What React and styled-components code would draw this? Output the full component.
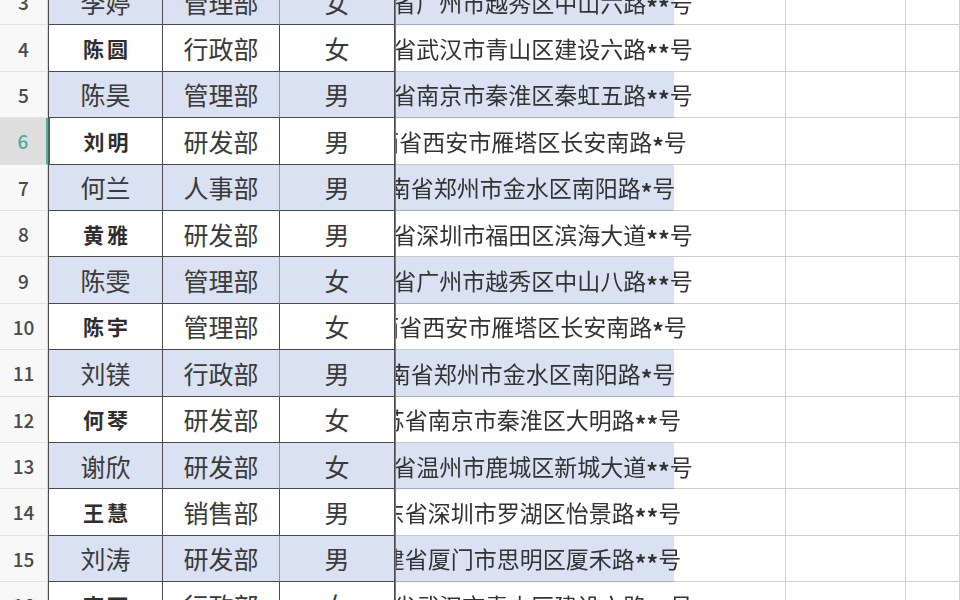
import styled, { createGlobalStyle } from "styled-components";

// spreadsheet view, scrolled so row 3 is half hidden at the top
const rows = [
  { n: 3, name: "李婷", dept: "管理部", sex: "女", addr: "广东省广州市越秀区中山六路**号" },
  { n: 4, name: "陈圆", dept: "行政部", sex: "女", addr: "湖北省武汉市青山区建设六路**号" },
  { n: 5, name: "陈昊", dept: "管理部", sex: "男", addr: "江苏省南京市秦淮区秦虹五路**号" },
  { n: 6, name: "刘明", dept: "研发部", sex: "男", addr: "陕西省西安市雁塔区长安南路*号" },
  { n: 7, name: "何兰", dept: "人事部", sex: "男", addr: "河南省郑州市金水区南阳路*号" },
  { n: 8, name: "黄雅", dept: "研发部", sex: "男", addr: "广东省深圳市福田区滨海大道**号" },
  { n: 9, name: "陈雯", dept: "管理部", sex: "女", addr: "广东省广州市越秀区中山八路**号" },
  { n: 10, name: "陈宇", dept: "管理部", sex: "女", addr: "陕西省西安市雁塔区长安南路*号" },
  { n: 11, name: "刘镁", dept: "行政部", sex: "男", addr: "河南省郑州市金水区南阳路*号" },
  { n: 12, name: "何琴", dept: "研发部", sex: "女", addr: "江苏省南京市秦淮区大明路**号" },
  { n: 13, name: "谢欣", dept: "研发部", sex: "女", addr: "浙江省温州市鹿城区新城大道**号" },
  { n: 14, name: "王慧", dept: "销售部", sex: "男", addr: "广东省深圳市罗湖区怡景路**号" },
  { n: 15, name: "刘涛", dept: "研发部", sex: "男", addr: "福建省厦门市思明区厦禾路**号" },
  { n: 16, name: "李丽", dept: "行政部", sex: "女", addr: "湖北省武汉市青山区建设六路**号" },
];

const SELECTED = 6;

const renderAddress = (addr) =>
  addr.split(/(\*+)/).map((part, i) =>
    part.startsWith("*") ? <Star key={i}>{part}</Star> : part
  );

const App = () => {
  return (
    <>
      <GlobalStyle />
      <Viewport>
        <Sheet>
          {rows.map((r) => {
            const fill = r.n % 2 === 1;
            const selected = r.n === SELECTED;
            return (
              <Row key={r.n}>
                <RowNum $selected={selected}>{r.n}</RowNum>
                <NameCell $fill={fill} $selected={selected}>
                  {r.name}
                </NameCell>
                <Cell $w={117} $fill={fill} $soft={fill}>
                  {r.dept}
                </Cell>
                <Cell $w={115} $fill={fill}>
                  {r.sex}
                </Cell>
                <AddressArea>
                  <AddressCell $fill={fill}>
                    <span>{renderAddress(r.addr)}</span>
                  </AddressCell>
                  <GridCell $w={112} />
                  <GridCell $w={120} />
                  <GridCell $grow />
                </AddressArea>
              </Row>
            );
          })}
        </Sheet>
      </Viewport>
    </>
  );
};

export default App;

const GlobalStyle = createGlobalStyle`
  html, body {
    margin: 0;
    padding: 0;
    background: #ffffff;
    overflow: hidden;
  }
  body {
    font-family: "Noto Sans CJK SC", "Noto Sans", sans-serif;
  }
`;

const Viewport = styled.div`
  width: 960px;
  height: 600px;
  overflow: hidden;
  filter: blur(0.4px);
`;

const Sheet = styled.div`
  margin-top: -21px;
  display: flex;
  flex-direction: column;
`;

const Row = styled.div`
  display: flex;
  height: 46.4px;
  flex: none;
`;

const RowNum = styled.div`
  flex: none;
  width: 48px;
  box-sizing: border-box;
  display: flex;
  align-items: center;
  justify-content: center;
  font-size: 19px;
  font-weight: 500;
  color: ${(p) => (p.$selected ? "#4fa898" : "#4a4a4a")};
  background: ${(p) => (p.$selected ? "#dedede" : "#f8f8f8")};
  border-bottom: 1px solid #e2e2e2;
  border-right: ${(p) => (p.$selected ? "2px solid #5fa99b" : "1px solid #d8d8d8")};
`;

const Cell = styled.div`
  flex: none;
  width: ${(p) => p.$w}px;
  box-sizing: border-box;
  display: flex;
  align-items: center;
  justify-content: center;
  font-size: 25px;
  color: #3a3a3a;
  background: ${(p) => (p.$fill ? "#d9e1f2" : "#ffffff")};
  border-right: 1px solid ${(p) => (p.$soft ? "#8a96ae" : "#4a4a4a")};
  border-bottom: 1px solid #4a4a4a;
  white-space: nowrap;
`;

const NameCell = styled(Cell)`
  width: 115px;
  border-left: ${(p) => (p.$selected ? "2px solid #3f6f64" : "1px solid #4a4a4a")};
  ${(p) =>
    !p.$fill &&
    `
    font-size: 21px;
    font-weight: 700;
    letter-spacing: 3px;
    padding-left: 3px;
    color: #2e2e2e;
  `}
`;

const AddressArea = styled.div`
  flex: 1;
  min-width: 0;
  display: flex;
  overflow: hidden;
  border-left: 1px solid #7a7a7a;
`;

const AddressCell = styled.div`
  flex: none;
  width: 308px;
  margin-left: -30px;
  box-sizing: border-box;
  display: flex;
  align-items: center;
  justify-content: center;
  white-space: nowrap;
  font-size: 23px;
  color: #333333;
  background: ${(p) => (p.$fill ? "#d9e1f2" : "transparent")};
  border-bottom: 1px solid ${(p) => (p.$fill ? "#a4adc0" : "#c9c9c9")};
`;

const Star = styled.span`
  position: relative;
  top: 5px;
  font-weight: 700;
`;

const GridCell = styled.div`
  flex: ${(p) => (p.$grow ? "1" : "none")};
  width: ${(p) => (p.$w ? `${p.$w}px` : "auto")};
  box-sizing: border-box;
  border-right: 1px solid #cfcfcf;
  border-bottom: 1px solid #cfcfcf;
`;
